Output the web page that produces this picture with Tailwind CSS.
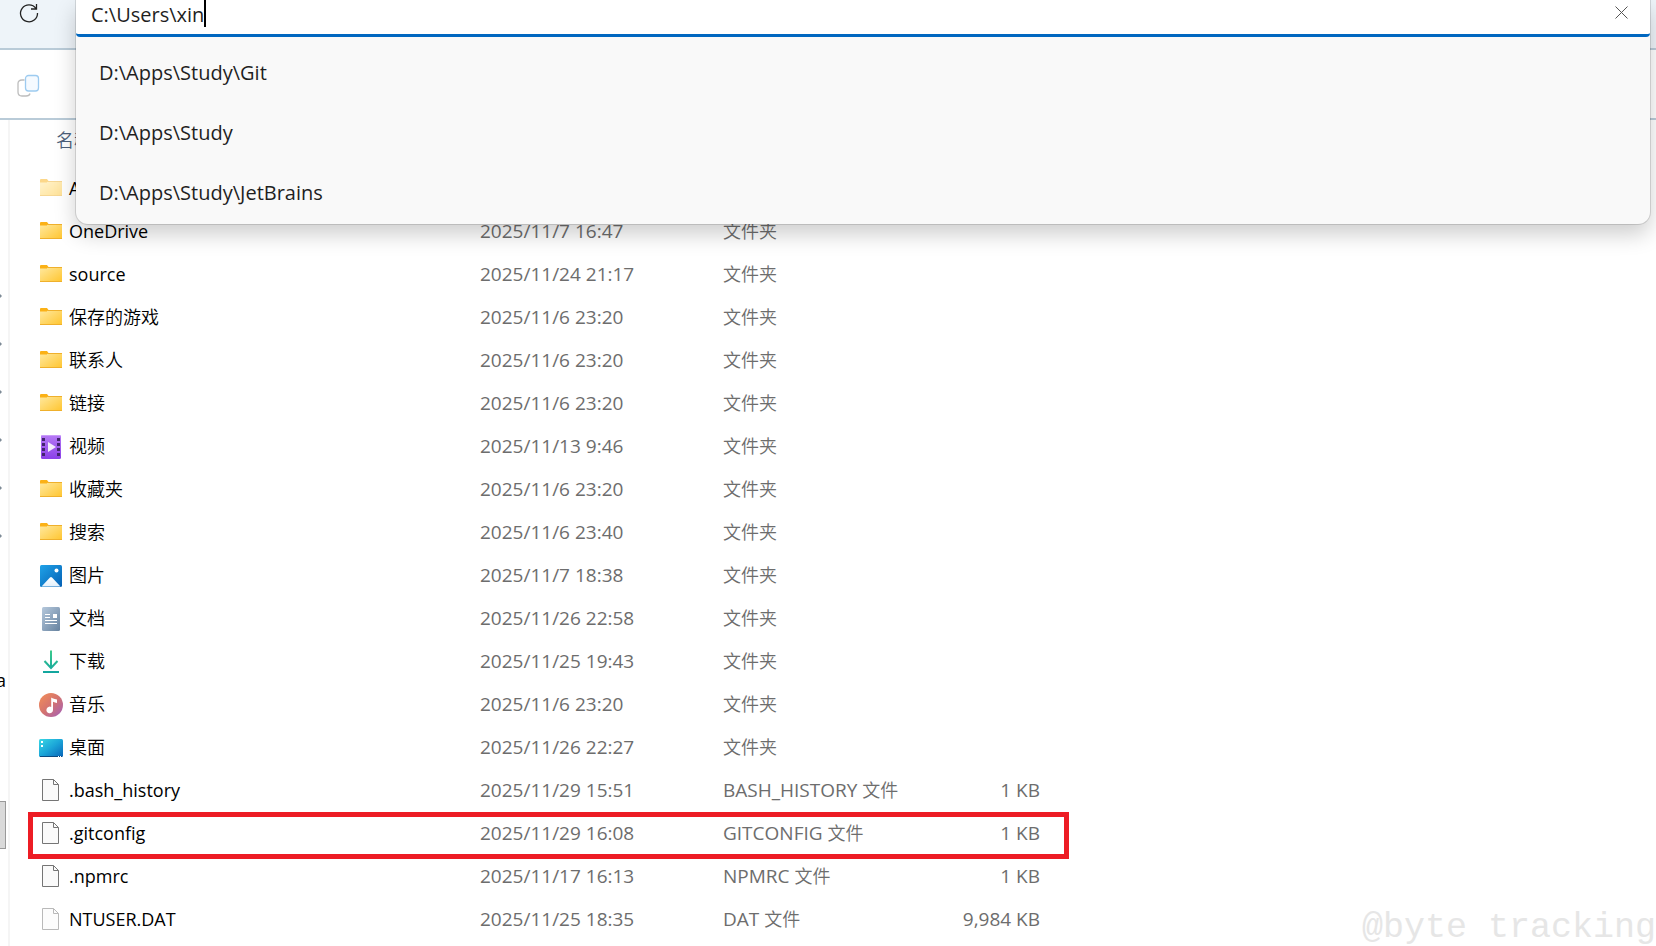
<!DOCTYPE html>
<html lang="zh-CN">
<head>
  <meta charset="UTF-8">
  <meta name="viewport" content="width=device-width, initial-scale=1.0">
  <title>C:\Users\xin</title>
  <script src="https://cdn.jsdelivr.net/npm/@tailwindcss/browser@4"></script>
</head>
<body class="bg-white font-['Open_Sans','Noto_Sans_CJK_SC',sans-serif] text-black">

  <!-- Icons -->
  <svg class="absolute w-0 h-0" aria-hidden="true">
    <defs>
      <linearGradient id="gFolder" x1="0" y1="0" x2="1" y2="1"><stop offset="0" stop-color="#ffe9a0"/><stop offset="1" stop-color="#ffc52f"/></linearGradient>
      <linearGradient id="gVideo" x1="0" y1="0" x2="0" y2="1"><stop offset="0" stop-color="#b67af5"/><stop offset="1" stop-color="#8a3fe8"/></linearGradient>
      <linearGradient id="gPicture" x1="0" y1="0" x2="1" y2="1"><stop offset="0" stop-color="#1fa2e8"/><stop offset="1" stop-color="#0560b4"/></linearGradient>
      <linearGradient id="gSnow" x1="0" y1="0" x2="0" y2="1"><stop offset="0" stop-color="#ffffff"/><stop offset="1" stop-color="#e2f0fc"/></linearGradient>
      <linearGradient id="gDoc" x1="0" y1="0" x2="1" y2="1"><stop offset="0" stop-color="#b5c8dc"/><stop offset="1" stop-color="#66829f"/></linearGradient>
      <linearGradient id="gDown" gradientUnits="userSpaceOnUse" x1="0" y1="1" x2="0" y2="24"><stop offset="0" stop-color="#3cc98c"/><stop offset="1" stop-color="#0fa3a0"/></linearGradient>
      <linearGradient id="gMusic" x1="0" y1="0" x2="1" y2="1"><stop offset="0.1" stop-color="#ee8a5c"/><stop offset="0.5" stop-color="#d4736f"/><stop offset="1" stop-color="#a15fbd"/></linearGradient>
      <linearGradient id="gDesk" x1="0" y1="0" x2="1" y2="1"><stop offset="0" stop-color="#3ad8e4"/><stop offset="0.5" stop-color="#1ba5d8"/><stop offset="1" stop-color="#0864b8"/></linearGradient>
    </defs>
    <symbol id="folder" viewBox="0 0 24 24">
      <path d="M1 3q0-1 1-1h6l1.500 2L8 6H1z" fill="#fbb116"/>
      <path d="M1 5.500h7L9.500 4H22q1 0 1 1v13q0 1-1 1H2q-1 0-1-1z" fill="url(#gFolder)"/>
      <path d="M8.500 4.500H23M1 18.500h22" stroke="#efb02c" fill="none"/>
    </symbol>
    <symbol id="video" viewBox="0 0 24 24">
      <rect x="2" width="20" height="24" rx="1.500" fill="url(#gVideo)"/>
      <path d="M2.500.5h19" stroke="#c99bfa"/>
      <path d="M3 3h3v3H3zM3 8h3v3H3zM3 13h3v3H3zM3 18h3v3H3zM18 3h3v3h-3zM18 8h3v3h-3zM18 13h3v3h-3zM18 18h3v3h-3z" fill="#43256f"/>
      <path d="M9 7l8 5-8 5z" fill="#f3ecfb"/>
    </symbol>
    <symbol id="picture" viewBox="0 0 24 24">
      <rect x="1" y="1" width="22" height="22" rx="1.500" fill="url(#gPicture)"/>
      <circle cx="17.500" cy="6.500" r="2" fill="#fff"/>
      <path d="M2.500 22.500l8.500-9q1-1 2 0l8.500 9z" fill="url(#gSnow)"/>
    </symbol>
    <symbol id="doc" viewBox="0 0 24 24">
      <rect x="3" width="18" height="24" rx="1.500" fill="url(#gDoc)"/>
      <path d="M6 7.500h5M6 10.500h5M6 13.500h12M6 16.500h12" stroke="#fff" stroke-width="1.200"/>
      <rect x="14" y="7" width="4" height="4" fill="#fff"/>
    </symbol>
    <symbol id="download" viewBox="0 0 24 24">
      <path d="M12 .5V18M5.500 11l6.500 7 6.500-7M4 22h16" fill="none" stroke="url(#gDown)" stroke-width="2"/>
    </symbol>
    <symbol id="music" viewBox="0 0 24 24">
      <circle cx="12" cy="12" r="12" fill="url(#gMusic)"/>
      <path d="M12.200 4.500q1 .8 5.800 2v3.500q-2-.2-4-1.200v8.200a3.300 3.300 0 1 1-1.800-3z" fill="#fff"/>
    </symbol>
    <symbol id="desktop" viewBox="0 0 24 24">
      <rect y="3" width="24" height="18" rx="1.500" fill="url(#gDesk)"/>
      <path d="M2 5h2v2H2zM2 9h2v2H2z" fill="#fff"/>
      <path d="M1 20.500h22" stroke="#0a4a80"/>
      <path d="M19 20.500h1M21 20.500h1" stroke="#fff"/>
    </symbol>
    <symbol id="file" viewBox="0 0 24 24">
      <path d="M3.500.5h11l5 5v16h-16z" fill="#fafafa" stroke="#757575"/>
      <path d="M14.500.5v5h5" fill="none" stroke="#757575"/>
    </symbol>
  </svg>

  <div class="relative min-h-screen overflow-hidden flex flex-col">

    <!-- Navigation bar -->
    <header class="h-[50px] bg-[#eef4f9] border-b-2 border-[#b9cbd8] pl-4">
      <button class="block w-6 h-6" aria-label="Refresh">
        <svg class="w-6 h-6" viewBox="0 0 24 24" fill="none" stroke="#222" stroke-width="1.300">
          <path d="M20 8.500A8.500 8.500 0 1 0 21.500 13M20.500 4v5h-5.500"/>
        </svg>
      </button>
    </header>

    <!-- Toolbar -->
    <div class="h-[70px] border-b-2 border-[#b9cbd8] pl-4 pt-1 flex items-center">
      <button class="w-6 h-6" aria-label="Copy">
        <svg class="w-6 h-6" viewBox="0 0 24 24" fill="none" stroke-width="1.300">
          <path d="M8.500 6H6Q2 6 2 9.500v8.500q0 4 4 4h4q3.500 0 4-2.500" stroke="#bdbdbd"/>
          <rect x="9.500" y="1.500" width="13" height="15.500" rx="3" stroke="#9dcbf0" fill="#f5faff"/>
        </svg>
      </button>
    </div>

    <div class="flex flex-1">
      <!-- Navigation pane, mostly scrolled out on the left -->
      <nav class="w-[10px] shrink-0 border-r-2 border-[#f5f5f5] pt-[152px] overflow-hidden">
        <div id="chevrons"></div>
        <div class="mt-24 h-12 w-[6px] flex items-center justify-end text-[18px]">a</div>
        <div class="mt-[97px] h-12 w-[6px] bg-[#d9d9d9] border border-l-0 border-[#999]"></div>
      </nav>

      <main class="flex-1 pl-[18px]">
        <table class="table-fixed w-[1041px] text-left text-[19px] leading-6">
          <thead>
            <tr class="h-[47px] text-[18px] text-[#4c607a]">
              <th class="w-[452px] p-0 pl-[28px] pb-2 font-[350]">名称</th>
              <th class="w-[243px] p-0"></th>
              <th class="w-[200px] p-0"></th>
              <th class="p-0"></th>
            </tr>
          </thead>
          <tbody id="files"></tbody>
        </table>
      </main>
    </div>

    <!-- Address box with suggestions -->
    <div class="absolute top-0 left-[76px] right-[6px] h-[224px] bg-[#f9f9f9] rounded-b-xl text-xl text-[#1f1f1f] shadow-[0_0_0_1px_rgba(0,0,0,0.12),0_10px_22px_rgba(0,0,0,0.2)]">
      <div class="h-[37px] bg-white border-b-3 border-[#0067c0] rounded-b-sm pl-[15px] pr-[21px] flex items-start">
        <input type="text" value="C:\Users\xin" aria-label="Address" class="field-sizing-content h-[29px] outline-none">
        <span class="w-0.5 h-[27px] bg-black"></span>
        <button class="ml-auto w-[15px] h-[25px] flex items-center" aria-label="Clear">
          <svg class="w-[15px] h-[15px]" viewBox="0 0 15 15" stroke="#555"><path d="M1.500 1.500l12 12M13.500 1.500l-12 12"/></svg>
        </button>
      </div>
      <ul class="pt-[6px]">
        <li class="h-[60px] pl-[23px] flex items-center">D:\Apps\Study\Git</li>
        <li class="h-[60px] pl-[23px] flex items-center">D:\Apps\Study</li>
        <li class="h-[60px] pl-[23px] flex items-center">D:\Apps\Study\JetBrains</li>
      </ul>
    </div>

    <div class="absolute right-0 bottom-0 text-[35px] leading-9 text-[#e6e6e6] font-['Liberation_Mono',monospace]">@byte tracking</div>
  </div>

  <script>
    const files = [
      ['folder', 'AppData', '', '', '', 'faded'],
      ['folder', 'OneDrive', '2025/11/7 16:47', '文件夹'],
      ['folder', 'source', '2025/11/24 21:17', '文件夹'],
      ['folder', '保存的游戏', '2025/11/6 23:20', '文件夹'],
      ['folder', '联系人', '2025/11/6 23:20', '文件夹'],
      ['folder', '链接', '2025/11/6 23:20', '文件夹'],
      ['video', '视频', '2025/11/13 9:46', '文件夹'],
      ['folder', '收藏夹', '2025/11/6 23:20', '文件夹'],
      ['folder', '搜索', '2025/11/6 23:40', '文件夹'],
      ['picture', '图片', '2025/11/7 18:38', '文件夹'],
      ['doc', '文档', '2025/11/26 22:58', '文件夹'],
      ['download', '下载', '2025/11/25 19:43', '文件夹'],
      ['music', '音乐', '2025/11/6 23:20', '文件夹'],
      ['desktop', '桌面', '2025/11/26 22:27', '文件夹'],
      ['file', '.bash_history', '2025/11/29 15:51', 'BASH_HISTORY 文件', '1 KB'],
      ['file', '.gitconfig', '2025/11/29 16:08', 'GITCONFIG 文件', '1 KB', 'marked'],
      ['file', '.npmrc', '2025/11/17 16:13', 'NPMRC 文件', '1 KB'],
      ['file', 'NTUSER.DAT', '2025/11/25 18:35', 'DAT 文件', '9,984 KB', 'faded'],
    ];

    // Chinese glyphs are set a little smaller and lighter than the latin ones
    function cjk(text) {
      return text.replace(/[\u4e00-\u9fff]+/g, '<span class="text-[18px] font-[350]">$&</span>');
    }

    document.getElementById('files').innerHTML = files.map(([icon, name, date, type, size = '', state]) => `
      <tr class="relative h-[43px] text-[#6d6d6d]">
        <td class="p-0 pl-[11px] text-black text-[18px]">
          <div class="flex items-center gap-[6px]">
            <svg class="w-6 h-6 ${state === 'faded' ? 'opacity-50' : ''}"><use href="#${icon}"/></svg>
            <span class="pb-0.5">${cjk(name)}</span>
          </div>
          ${state === 'marked' ? '<div class="absolute inset-x-0 top-0 h-[47px] border-5 border-[#ed1c24]"></div>' : ''}
        </td>
        <td class="p-0 pb-0.5">${date}</td>
        <td class="p-0 pb-0.5 whitespace-nowrap">${cjk(type)}</td>
        <td class="p-0 pb-0.5 pr-[29px] text-right">${size}</td>
      </tr>`).join('');

    document.getElementById('chevrons').innerHTML = files.slice(0, 6).map(() => `
      <div class="h-12 flex items-center">
        <svg class="w-[2px] h-2" viewBox="4 0 2 8" fill="none" stroke="#7d8a96" stroke-width="1.500"><path d="M1 0l4 4-4 4"/></svg>
      </div>`).join('');
  </script>
</body>
</html>
